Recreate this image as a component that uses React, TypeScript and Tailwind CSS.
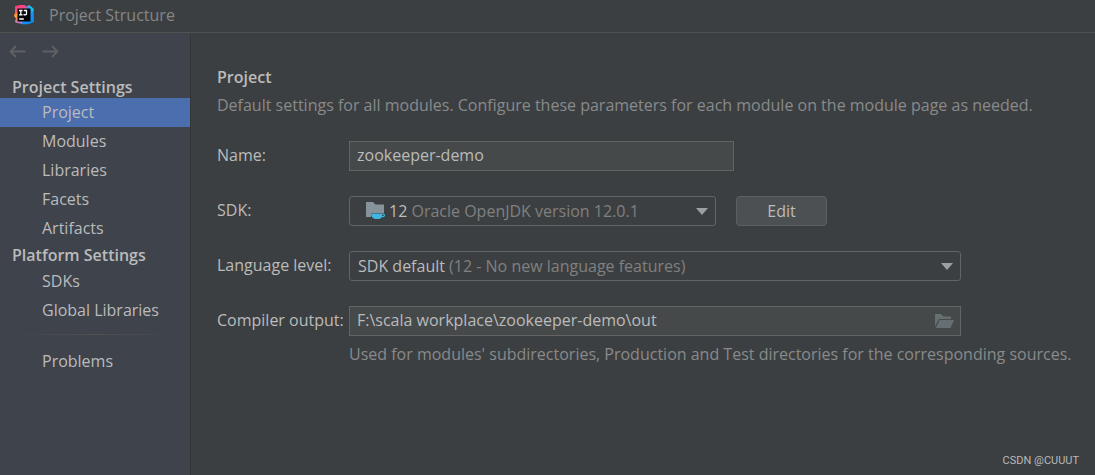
import type { ReactNode } from "react";

const projectItems = ["Project", "Modules", "Libraries", "Facets", "Artifacts"];
const platformItems = ["SDKs", "Global Libraries"];

function AppLogo() {
  return (
    <svg viewBox="0 0 20 20" className="size-5 shrink-0" aria-hidden="true">
      <defs>
        <linearGradient id="warm" x1="0" y1="0" x2="0.3" y2="1">
          <stop offset="0" stopColor="#fe315d" />
          <stop offset="0.3" stopColor="#f94b8c" />
          <stop offset="0.55" stopColor="#f97a12" />
          <stop offset="0.8" stopColor="#e58a8a" />
          <stop offset="1" stopColor="#b07bd8" />
        </linearGradient>
        <linearGradient id="cool" x1="0" y1="0" x2="0.4" y2="1">
          <stop offset="0" stopColor="#fb8a3a" />
          <stop offset="0.25" stopColor="#3f9bf0" />
          <stop offset="1" stopColor="#0a8bf2" />
        </linearGradient>
      </defs>
      <path d="M1 1 6 0h4.500l1 10L9 19 3 18 1 17l1-4-2-2 1-4z" fill="url(#warm)" />
      <path d="M0 10.500 4 7v5L1.500 13z" fill="#fca02f" />
      <path d="M11 2.500 15 0l4.500 3.500L20 17l-5 2-6 .5-1-1.500z" fill="url(#cool)" />
      <path d="M7 0h4l2 2.500L8 4z" fill="#f5468c" />
      <path d="M15 0l4.500 4-.5 3-3-2.500z" fill="#18c3f5" />
      <path d="M3.500 3.500h13v13h-13z" fill="#050505" />
      <path
        d="M5 5.500h3.600M6.800 5.500v4.300M5 9.800h3.600M9.800 5.500h2.700v3.200c0 1.300-2 1.500-2.900.5M5.200 14h4.600"
        stroke="#fff"
        strokeWidth="1.300"
        fill="none"
      />
    </svg>
  );
}

function Arrow({ back = false }: { back?: boolean }) {
  return (
    <svg viewBox="0 0 17 13" className="h-[13px] w-[17px]" fill="none" stroke="#5f6163" strokeWidth="1.800" aria-hidden="true">
      {back ? <path d="M16.500 6.500H1.500M7 1 1.500 6.500 7 12" /> : <path d="M.5 6.500h15M10 1l5.500 5.500L10 12" />}
    </svg>
  );
}

function SdkFolder() {
  return (
    <svg viewBox="0 0 20 18" className="h-[18px] w-5 shrink-0" aria-hidden="true">
      <path d="M0 0h7l2.500 2.500H18V11H5v4H0z" fill="#87939a" />
      <path d="M5 11.500h11.500c3.500-.6 3.500 4.200-.8 3.800-.8 1-1.600 1.500-2.500 1.700H9c-2.500-.8-4-2.500-4-5.500z" fill="#40b6e0" />
      <path d="M16 12.700h1.500c.7 0 .5 1.500-1.500 1.400z" fill="#3c3f41" />
    </svg>
  );
}

function OpenFolder() {
  return (
    <svg viewBox="0 0 19 14" className="h-3.5 w-[19px]" aria-hidden="true">
      <path d="M0 0h6l2.500 2.500H16V5H4L0 12.500z" fill="#667073" />
      <path d="M4.500 6H19l-3.500 8H.8z" fill="#667073" />
    </svg>
  );
}

function NavSection({ title, items, className }: { title: string; items: string[]; className: string }) {
  return (
    <section>
      <h2 className={`flex items-center pl-3 font-semibold ${className}`}>{title}</h2>
      <ul>
        {items.map((item) => (
          <NavItem key={item} label={item} />
        ))}
      </ul>
    </section>
  );
}

function NavItem({ label }: { label: string }) {
  const active = label === "Project";
  return (
    <li>
      <a
        href="#"
        aria-current={active ? "page" : undefined}
        className={`flex h-[29px] items-center pb-px pl-[42px] ${active ? "bg-[#4b6eaf]" : ""}`}
      >
        {label}
      </a>
    </li>
  );
}

function Row({ label, id, children }: { label: string; id: string; children: ReactNode }) {
  return (
    <div className="flex items-center">
      <label htmlFor={id} className="w-[132px] shrink-0 whitespace-nowrap pb-0.5">
        {label}
      </label>
      {children}
    </div>
  );
}

function Dropdown({ id, value, className, children }: { id: string; value: string; className: string; children: ReactNode }) {
  return (
    <div className={`relative h-[30px] w-full ${className}`}>
      <select id={id} className="size-full appearance-none rounded-[3px] border border-[#646464] bg-[#3c3f41] px-2 text-transparent">
        <option>{value}</option>
      </select>
      <div aria-hidden="true" className="pointer-events-none absolute inset-0 flex items-center whitespace-pre pr-2 pl-[9px]">
        {children}
        <svg viewBox="0 0 12 7" className="ml-auto h-[7px] w-3 shrink-0">
          <path d="M0 0h12L6 7z" fill="#9da0a3" />
        </svg>
      </div>
    </div>
  );
}

const field = "h-[30px] w-full border border-[#646464] bg-[#45494a] px-[7px] pb-0.5";

export default function App() {
  return (
    <div className="flex min-h-screen flex-col bg-[#3c3f41] font-['Open_Sans','Noto_Sans',sans-serif] text-base leading-6 text-[#bbbbbb]">
      <header className="flex h-[33px] items-center gap-[15px] border-b border-[#515151] pb-[2px] pl-3.5 text-[#848687]">
        <AppLogo />
        <h1>Project Structure</h1>
      </header>
      <div className="flex flex-1">
        <nav className="w-[191px] shrink-0 border-r border-[#353739] bg-[#3e434c]">
          <div className="flex h-[42px] items-center gap-4 pb-[6px] pl-[9px]">
            <button type="button" aria-label="Back">
              <Arrow back />
            </button>
            <button type="button" aria-label="Forward">
              <Arrow />
            </button>
          </div>
          <NavSection title="Project Settings" items={projectItems} className="h-[23px]" />
          <NavSection title="Platform Settings" items={platformItems} className="h-6" />
          <hr className="mx-3 mt-[9px] mb-3 h-px border-0 bg-linear-to-r from-transparent via-[#515151] to-transparent" />
          <ul>
            <NavItem label="Problems" />
          </ul>
        </nav>
        <main className="flex min-w-0 flex-1 flex-col pt-8 pr-4 pl-[26px]">
          <h2 className="font-semibold">Project</h2>
          <p className="mt-1 text-[#888a8b]">
            Default settings for all modules. Configure these parameters for each module on the module page as needed.
          </p>
          <form className="mt-6 flex flex-col gap-[25px]">
            <Row label="Name:" id="name">
              <input id="name" defaultValue="zookeeper-demo" className={`${field} max-w-[385px]`} />
            </Row>
            <Row label="SDK:" id="sdk">
              <Dropdown id="sdk" value="12 Oracle OpenJDK version 12.0.1" className="max-w-[367px]">
                <span className="flex items-center gap-[3px] pl-2">
                  <SdkFolder />
                  12{" "}
                </span>
                <span className="text-[#808080]">Oracle OpenJDK version 12.0.1</span>
              </Dropdown>
              <button type="button" className="ml-5 h-[30px] w-[91px] shrink-0 rounded-[4px] border border-[#5e6060] bg-[#4c5052]">
                Edit
              </button>
            </Row>
            <Row label="Language level:" id="level">
              <Dropdown id="level" value="SDK default (12 - No new language features)" className="max-w-[612px]">
                <span>SDK default </span>
                <span className="text-[#808080]">(12 - No new language features)</span>
              </Dropdown>
            </Row>
            <Row label="Compiler output:" id="output">
              <div className="relative w-full max-w-[612px]">
                <input id="output" defaultValue="F:\scala workplace\zookeeper-demo\out" className={`${field} block pr-9`} />
                <button type="button" aria-label="Browse" className="absolute inset-y-0 right-[7px]">
                  <OpenFolder />
                </button>
              </div>
            </Row>
          </form>
          <p className="mt-[6px] pl-[132px] text-[#888a8b]">
            Used for modules' subdirectories, Production and Test directories for the corresponding sources.
          </p>
          <footer className="mt-auto pb-1.5 text-right font-['Roboto',sans-serif] text-[11px] leading-4 text-[#b8b9ba]">
            CSDN @CUUUT
          </footer>
        </main>
      </div>
    </div>
  );
}
